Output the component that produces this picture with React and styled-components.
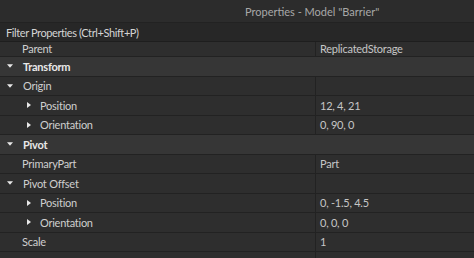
import styled, { createGlobalStyle } from "styled-components";

const GlobalStyle = createGlobalStyle`
  html, body {
    margin: 0;
    padding: 0;
    background: #2e2e2e;
  }
  body {
    font-family: "Lato", "Noto Sans", sans-serif;
    font-size: 11px;
    letter-spacing: -0.25px;
  }
`;

const Panel = styled.div`
  width: 474px;
  height: 258px;
  display: flex;
  flex-direction: column;
  overflow: hidden;
  background: #2e2e2e;
`;

const TitleBar = styled.div`
  height: 22px;
  flex: none;
  display: flex;
  align-items: center;
  padding-left: 245px;
  color: #a8a8a8;
  letter-spacing: 0;
  background: #2c2c2c;
  border-bottom: 1px solid #222;
`;

const FilterBar = styled.div`
  height: 18px;
  flex: none;
  display: flex;
  align-items: center;
  padding-left: 6px;
  color: #d4d4d4;
  letter-spacing: -0.4px;
  background: #272727;
  border-bottom: 1px solid #1e1e1e;
  position: relative;
  z-index: 1;
`;

const List = styled.div`
  flex: 1;
  overflow: hidden;
`;

const Scroller = styled.div`
  margin-top: -4.5px;
`;

const Row = styled.div`
  height: 18.5px;
  display: grid;
  grid-template-columns: ${(p) => (p.$header ? "1fr" : "316px 1fr")};
  border-bottom: 1px solid #222;
  background: ${(p) => (p.$header ? "#363636" : "#2e2e2e")};
`;

const NameCell = styled.div`
  display: flex;
  align-items: center;
  padding-left: ${(p) => p.$indent}px;
  padding-top: ${(p) => (p.$low ? 3 : 0)}px;
  color: ${(p) => (p.$header ? "#e8e8e8" : "#cfcfcf")};
  font-weight: ${(p) => (p.$header ? 700 : 400)};
  border-right: ${(p) => (p.$header ? "none" : "1px solid #222")};
`;

const ValueCell = styled.div`
  display: flex;
  align-items: center;
  padding-left: 4px;
  padding-top: ${(p) => (p.$low ? 3 : 0)}px;
  color: #c6c6c6;
`;

const Arrow = styled.svg`
  width: 6px;
  height: 6px;
  margin-left: ${(p) => p.$at}px;
  margin-right: ${(p) => p.$gap}px;
  flex: none;
`;

function Down({ at }) {
  return (
    <Arrow viewBox="0 0 6 6" $at={at} $gap={10}>
      <path d="M0 1.2 H6 L3 4.8 Z" fill="#e8e8e8" />
    </Arrow>
  );
}

function Right({ at }) {
  return (
    <Arrow viewBox="0 0 6 6" $at={at} $gap={8}>
      <path d="M1 0 L5 3 L1 6 Z" fill="#e8e8e8" />
    </Arrow>
  );
}

const rows = [
  { name: "Parent", value: "ReplicatedStorage", indent: 22, low: true },
  { name: "Transform", header: true, arrow: "down", indent: 0 },
  { name: "Origin", arrow: "down", value: "", indent: 0 },
  { name: "Position", arrow: "right", value: "12, 4, 21", indent: 0 },
  { name: "Orientation", arrow: "right", value: "0, 90, 0", indent: 0 },
  { name: "Pivot", header: true, arrow: "down", indent: 0 },
  { name: "PrimaryPart", value: "Part", indent: 22 },
  { name: "Pivot Offset", arrow: "down", value: "", indent: 0 },
  { name: "Position", arrow: "right", value: "0, -1.5, 4.5", indent: 0 },
  { name: "Orientation", arrow: "right", value: "0, 0, 0", indent: 0 },
  { name: "Scale", value: "1", indent: 22 },
  { name: "", value: "", indent: 22 },
];

export default function App() {
  return (
    <>
      <GlobalStyle />
      <Panel>
        <TitleBar>Properties - Model "Barrier"</TitleBar>
        <FilterBar>Filter Properties (Ctrl+Shift+P)</FilterBar>
        <List>
          <Scroller>
            {rows.map((r, i) => (
              <Row key={i} $header={r.header}>
                <NameCell $header={r.header} $indent={r.indent} $low={r.low}>
                  {r.arrow === "down" && <Down at={7} />}
                  {r.arrow === "right" && <Right at={26} />}
                  {r.name}
                </NameCell>
                {!r.header && <ValueCell $low={r.low}>{r.value}</ValueCell>}
              </Row>
            ))}
          </Scroller>
        </List>
      </Panel>
    </>
  );
}
